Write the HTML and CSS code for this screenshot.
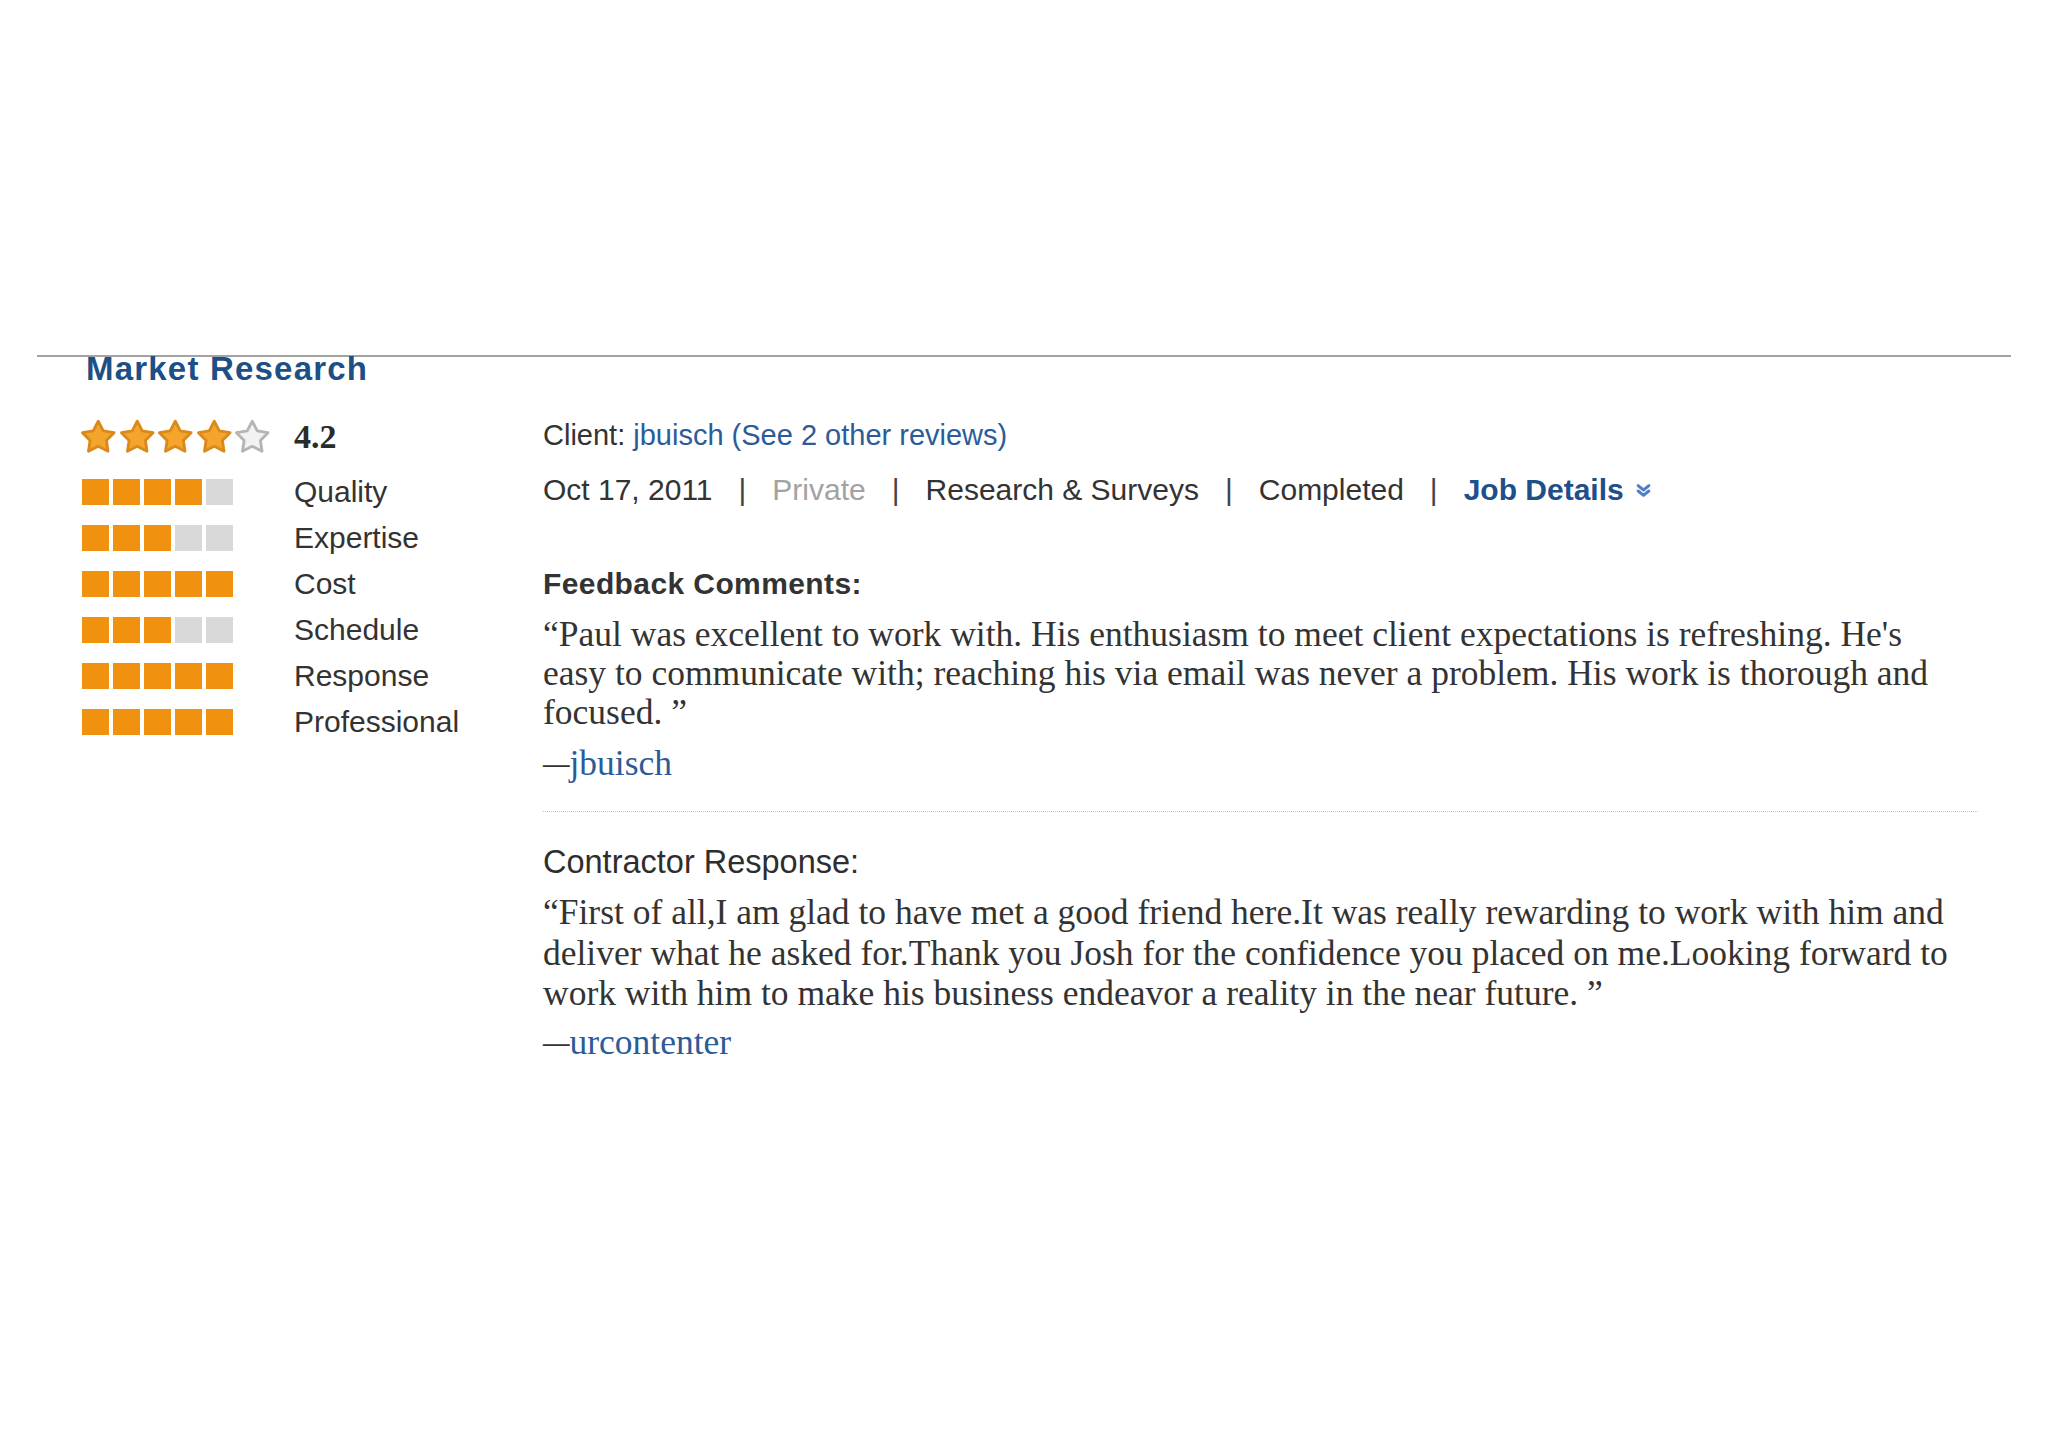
FILE: index.html
```html
<!DOCTYPE html>
<html lang="en">
<head>
<meta charset="utf-8">
<title>Market Research review</title>
<link rel="stylesheet" href="styles.css">
</head>
<body>
<section class="review">
  <h2 class="title">Market Research</h2>
  <div class="review-body">
    <div class="scores">
      <div class="overall">
        <div class="stars">
          <svg class="star full" viewBox="0 0 24 24"><path d="M12 2L15.17 8.13L21.99 9.26L17.14 14.17L18.17 20.99L12 17.9L5.83 20.99L6.86 14.17L2.01 9.26L8.83 8.13Z"/></svg>
          <svg class="star full" viewBox="0 0 24 24"><path d="M12 2L15.17 8.13L21.99 9.26L17.14 14.17L18.17 20.99L12 17.9L5.83 20.99L6.86 14.17L2.01 9.26L8.83 8.13Z"/></svg>
          <svg class="star full" viewBox="0 0 24 24"><path d="M12 2L15.17 8.13L21.99 9.26L17.14 14.17L18.17 20.99L12 17.9L5.83 20.99L6.86 14.17L2.01 9.26L8.83 8.13Z"/></svg>
          <svg class="star full" viewBox="0 0 24 24"><path d="M12 2L15.17 8.13L21.99 9.26L17.14 14.17L18.17 20.99L12 17.9L5.83 20.99L6.86 14.17L2.01 9.26L8.83 8.13Z"/></svg>
          <svg class="star empty" viewBox="0 0 24 24"><path d="M12 2L15.17 8.13L21.99 9.26L17.14 14.17L18.17 20.99L12 17.9L5.83 20.99L6.86 14.17L2.01 9.26L8.83 8.13Z"/></svg>
        </div>
        <span class="avg">4.2</span>
      </div>
      <div class="metric"><div class="bar"><i class="on"></i><i class="on"></i><i class="on"></i><i class="on"></i><i></i></div><span class="label">Quality</span></div>
      <div class="metric"><div class="bar"><i class="on"></i><i class="on"></i><i class="on"></i><i></i><i></i></div><span class="label">Expertise</span></div>
      <div class="metric"><div class="bar"><i class="on"></i><i class="on"></i><i class="on"></i><i class="on"></i><i class="on"></i></div><span class="label">Cost</span></div>
      <div class="metric"><div class="bar"><i class="on"></i><i class="on"></i><i class="on"></i><i></i><i></i></div><span class="label">Schedule</span></div>
      <div class="metric"><div class="bar"><i class="on"></i><i class="on"></i><i class="on"></i><i class="on"></i><i class="on"></i></div><span class="label">Response</span></div>
      <div class="metric"><div class="bar"><i class="on"></i><i class="on"></i><i class="on"></i><i class="on"></i><i class="on"></i></div><span class="label">Professional</span></div>
    </div>

    <div class="detail">
      <div class="client">Client: <a class="link" href="#">jbuisch (See 2 other reviews)</a></div>
      <div class="meta">
        <span>Oct 17, 2011</span><span class="sep">|</span><span class="muted">Private</span><span class="sep">|</span><span>Research &amp; Surveys</span><span class="sep">|</span><span>Completed</span><span class="sep">|</span><a class="job" href="#">Job Details<svg class="chev" viewBox="0 0 14 14"><path d="M2 2.5l5 4 5-4M2 7.5l5 4 5-4"/></svg></a>
      </div>

      <h3 class="fb-head">Feedback Comments:</h3>
      <p class="quote">&ldquo;Paul was excellent to work with. His enthusiasm to meet client expectations is refreshing. He's<br>easy to communicate with; reaching his via email was never a problem. His work is thorough and<br>focused. &rdquo;</p>
      <div class="sig"><span class="dash">&mdash;</span><a href="#">jbuisch</a></div>

      <div class="dots"></div>

      <h3 class="resp-head">Contractor Response:</h3>
      <p class="quote resp">&ldquo;First of all,I am glad to have met a good friend here.It was really rewarding to work with him and<br>deliver what he asked for.Thank you Josh for the confidence you placed on me.Looking forward to<br>work with him to make his business endeavor a reality in the near future. &rdquo;</p>
      <div class="sig resp-sig"><span class="dash">&mdash;</span><a href="#">urcontenter</a></div>
    </div>
  </div>
</section>
</body>
</html>
```
FILE: styles.css
```css
html, body {
  margin: 0;
  padding: 0;
  background: #ffffff;
}

body {
  font-family: "Liberation Sans", Arial, sans-serif;
  color: #333333;
}

.review {
  margin: 355px 37px 0 37px;
  border-top: 2px solid #a3a3a3;
  padding-bottom: 300px;
}

.title {
  margin: -3px 0 0 0;
  padding-left: 49px;
  font-size: 33px;
  line-height: 30px;
  font-weight: 700;
  letter-spacing: 1.2px;
  color: #1d4f86;
}

.review-body {
  display: grid;
  grid-template-columns: 462px 1435px;
  margin-top: 31px;
  padding-left: 44px;
}

/* ---------- left: scores ---------- */
.scores {
  display: flex;
  flex-direction: column;
}

.overall {
  display: grid;
  grid-template-columns: 213px auto;
  align-items: center;
  height: 44px;
  margin-bottom: 10px;
}

.stars {
  display: flex;
  gap: 0;
  margin-left: -2px;
}

.star {
  width: 38.5px;
  height: 38px;
  stroke-linejoin: round;
  stroke-width: 1.8;
}

.star.full {
  fill: #f5a52c;
  stroke: #d98a1a;
}

.star.empty {
  fill: #f2f2f2;
  stroke: #b5b5b5;
}

.avg {
  font-family: "Liberation Serif", "Times New Roman", serif;
  font-weight: 700;
  font-size: 34px;
  color: #2b2b2b;
}

.metric {
  display: grid;
  grid-template-columns: 213px auto;
  align-items: center;
  height: 46px;
}

.bar {
  display: flex;
  gap: 4px;
  padding-left: 1px;
}

.bar i {
  display: block;
  width: 27px;
  height: 26px;
  background: #d9d9d9;
}

.bar i.on {
  background: #f0920f;
}

.label {
  font-size: 30px;
  line-height: 46px;
  color: #333333;
}

/* ---------- right: detail ---------- */
.detail {
  display: flex;
  flex-direction: column;
}

.client {
  font-size: 29px;
  line-height: 40px;
  color: #333333;
}

.link {
  color: #2c5c98;
  text-decoration: none;
}

.meta {
  display: flex;
  align-items: center;
  margin-top: 15px;
  font-size: 30px;
  line-height: 40px;
  color: #333333;
}

.sep {
  margin: 0 26px;
  color: #444444;
}

.muted {
  color: #a2a2a2;
}

.job {
  display: flex;
  align-items: center;
  font-weight: 700;
  color: #1f4f8a;
  text-decoration: none;
}

.chev {
  width: 15px;
  height: 15px;
  margin-left: 12px;
  fill: none;
  stroke: #4f7fc4;
  stroke-width: 2.8;
  stroke-linecap: round;
  stroke-linejoin: round;
}

.fb-head {
  margin: 54px 0 0 0;
  font-size: 30px;
  line-height: 40px;
  font-weight: 700;
  letter-spacing: 0.4px;
  color: #333333;
}

.resp-head {
  margin: 30px 0 0 0;
  font-size: 32.5px;
  line-height: 40px;
  font-weight: 400;
  color: #2e2e2e;
}

.quote {
  margin: 11px 0 0 0;
  font-family: "Liberation Serif", "Times New Roman", serif;
  font-size: 35.5px;
  line-height: 39px;
  color: #333333;
  white-space: nowrap;
}

.quote.resp {
  margin-top: 10px;
  line-height: 40.5px;
}

.sig {
  margin-top: 12px;
  font-family: "Liberation Serif", "Times New Roman", serif;
  font-size: 35.5px;
  line-height: 39px;
  color: #333333;
}

.sig.resp-sig {
  margin-top: 9px;
}

.dash {
  display: inline-block;
  transform: scaleX(0.75);
  transform-origin: left center;
  margin-right: -9px;
  color: #333333;
}

.sig a {
  color: #2c5c98;
  text-decoration: none;
}

.dots {
  margin-top: 28px;
  border-top: 1px dotted #c4c4c4;
}
```
